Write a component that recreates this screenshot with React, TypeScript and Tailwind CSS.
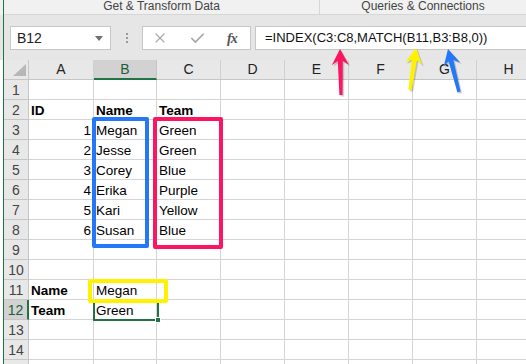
import { X, Check } from 'lucide-react'

type Cell = { v: string; b?: boolean; r?: boolean }

const cols = ['A', 'B', 'C', 'D', 'E', 'F', 'G', 'H']

const data: Record<string, Cell> = {
  A2: { v: 'ID', b: true },
  B2: { v: 'Name', b: true },
  C2: { v: 'Team', b: true },
  A3: { v: '1', r: true }, B3: { v: 'Megan' }, C3: { v: 'Green' },
  A4: { v: '2', r: true }, B4: { v: 'Jesse' }, C4: { v: 'Green' },
  A5: { v: '3', r: true }, B5: { v: 'Corey' }, C5: { v: 'Blue' },
  A6: { v: '4', r: true }, B6: { v: 'Erika' }, C6: { v: 'Purple' },
  A7: { v: '5', r: true }, B7: { v: 'Kari' }, C7: { v: 'Yellow' },
  A8: { v: '6', r: true }, B8: { v: 'Susan' }, C8: { v: 'Blue' },
  A11: { v: 'Name', b: true }, B11: { v: 'Megan' },
  A12: { v: 'Team', b: true }, B12: { v: 'Green' },
}

function arrowPoints(tx: number, ty: number, ex: number, ey: number) {
  const len = Math.hypot(ex - tx, ey - ty)
  const ux = (ex - tx) / len
  const uy = (ey - ty) / len
  const nx = -uy
  const ny = ux
  const p = (a: number, s: number, bx = tx, by = ty) =>
    `${(bx + ux * a + nx * s).toFixed(1)},${(by + uy * a + ny * s).toFixed(1)}`
  return [
    p(0, 0),
    p(16, 8.5),
    p(12, 2.5),
    p(0, 1.6, ex, ey),
    p(0, -1.6, ex, ey),
    p(12, -2.5),
    p(16, -8.5),
  ].join(' ')
}

function Arrow({ tx, ty, ex, ey, color }: { tx: number; ty: number; ex: number; ey: number; color: string }) {
  return (
    <g>
      <polygon points={arrowPoints(tx + 1.5, ty + 1.5, ex + 1.5, ey + 1.5)} fill="rgba(0,0,0,0.18)" />
      <polygon points={arrowPoints(tx, ty, ex, ey)} fill={color} />
    </g>
  )
}

export default function App() {
  const rows = Array.from({ length: 15 }, (_, i) => i + 1)

  return (
    <div className="relative w-[526px] h-[364px] overflow-hidden bg-white font-['Liberation_Sans',Arial,sans-serif] text-black flex">
      {/* sliver of window behind */}
      <div className="w-[4px] shrink-0 flex flex-col border-r border-[#217346]">
        <div className="h-[15px] bg-[#f1f1f1]" />
        <div className="h-[45px] bg-[#e6e6e6]" />
        <div className="flex-1 bg-white" />
      </div>

      <div className="flex-1 flex flex-col min-w-0">
        {/* ribbon group labels */}
        <div className="h-[15px] shrink-0 bg-[#f1f1f1] border-b border-[#d6d6d6] flex text-[12px] leading-[13px] text-[#444]">
          <div className="w-[316px] text-center border-r border-[#d6d6d6]">Get &amp; Transform Data</div>
          <div className="w-[206px] text-center">Queries &amp; Connections</div>
        </div>

        {/* formula bar */}
        <div className="h-[45px] shrink-0 bg-[#e6e6e6] flex items-start pt-[11px] pl-[6px]">
          <div className="w-[101px] h-[24px] bg-white border border-[#c6c6c6] flex items-center justify-between pl-[6px] pr-[7px]">
            <span className="text-[14px] text-[#222]">B12</span>
            <svg width="8" height="5" viewBox="0 0 8 5">
              <polygon points="0,0 8,0 4,5" fill="#707070" />
            </svg>
          </div>
          <div className="w-[31px] h-[24px] flex flex-col items-center justify-center gap-[2px]">
            <span className="w-[2px] h-[2px] bg-[#9a9a9a]" />
            <span className="w-[2px] h-[2px] bg-[#9a9a9a]" />
            <span className="w-[2px] h-[2px] bg-[#9a9a9a]" />
          </div>
          <div className="w-[109px] h-[24px] bg-white border border-[#c6c6c6] flex items-center pl-[9px] gap-[21px]">
            <X size={16} strokeWidth={1.6} className="text-[#a8a8a8]" />
            <Check size={17} strokeWidth={2.4} className="text-[#a8a8a8]" />
            <span className="font-['Liberation_Serif',serif] italic font-bold text-[14px] text-[#555] tracking-[-1px]">fx</span>
          </div>
          <div className="ml-[4px] flex-1 h-[24px] bg-white border border-r-0 border-[#c6c6c6] flex items-center pl-[9px] text-[13px] text-[#111]">
            =INDEX(C3:C8,MATCH(B11,B3:B8,0))
          </div>
        </div>

        {/* grid */}
        <div className="grid grid-cols-[25px_65px_63px_64px_64px_64px_64px_64px_64px] auto-rows-[20px]">
          <div className="bg-[#e8e8e8] border-r border-b border-[#c6c6c6] flex items-end justify-end pr-[2px] pb-[3px]">
            <svg width="13" height="12" viewBox="0 0 13 12">
              <polygon points="0,12 13,12 13,0" fill="#b7b7b7" />
            </svg>
          </div>
          {cols.map((c) => (
            <div
              key={c}
              className={
                c === 'B'
                  ? 'bg-[#d2d2d2] border-r border-[#c6c6c6] border-b-2 border-b-[#217346] flex items-center justify-center text-[14px] text-[#1d5e3a]'
                  : 'bg-[#e8e8e8] border-r border-b border-[#d0d0d0] border-b-[#c6c6c6] flex items-center justify-center text-[14px] text-[#222]'
              }
            >
              {c}
            </div>
          ))}
          {rows.map((r) => (
            <div key={r} className="contents">
              <div
                className={
                  r === 12
                    ? 'bg-[#d2d2d2] border-b border-[#c6c6c6] border-r-2 border-r-[#217346] flex items-center justify-center pt-[2px] text-[14px] text-[#1d5e3a]'
                    : 'bg-[#e8e8e8] border-r border-b border-[#c6c6c6] flex items-center justify-center pt-[2px] text-[14px] text-[#444]'
                }
              >
                {r < 15 ? r : ''}
              </div>
              {cols.map((c) => {
                const cell = data[`${c}${r}`]
                return (
                  <div
                    key={c}
                    className={`border-r border-b border-[#d4d4d4] flex items-center px-[2px] pt-[4px] text-[13.5px] whitespace-nowrap ${
                      cell?.r ? 'justify-end' : 'justify-start'
                    } ${cell?.b ? 'font-bold' : ''}`}
                  >
                    {cell?.v}
                  </div>
                )
              })}
            </div>
          ))}
        </div>
      </div>

      {/* active cell B12 */}
      <div className="absolute left-[93px] top-[299px] w-[66px] h-[22px] border-2 border-[#217346]">
        <div className="absolute right-[-4px] bottom-[-4px] w-[6px] h-[6px] bg-[#217346] border border-white" />
      </div>

      {/* highlight boxes */}
      <div className="absolute left-[92px] top-[117px] w-[57px] h-[131px] border-4 border-[#2478f5] rounded-[2px]" />
      <div className="absolute left-[153px] top-[117px] w-[70px] h-[132px] border-4 border-[#fc1560] rounded-[2px]" />
      <div className="absolute left-[88px] top-[279px] w-[80px] h-[24px] border-4 border-[#fff200] rounded-[2px]" />

      {/* arrows */}
      <svg className="absolute inset-0 pointer-events-none" width="526" height="364" viewBox="0 0 526 364">
        <Arrow tx={340} ty={49} ex={341} ey={95} color="#fc1560" />
        <Arrow tx={416} ty={48} ex={410} ey={90} color="#fff200" />
        <Arrow tx={448} ty={49} ex={459} ey={92} color="#2478f5" />
      </svg>
    </div>
  )
}
